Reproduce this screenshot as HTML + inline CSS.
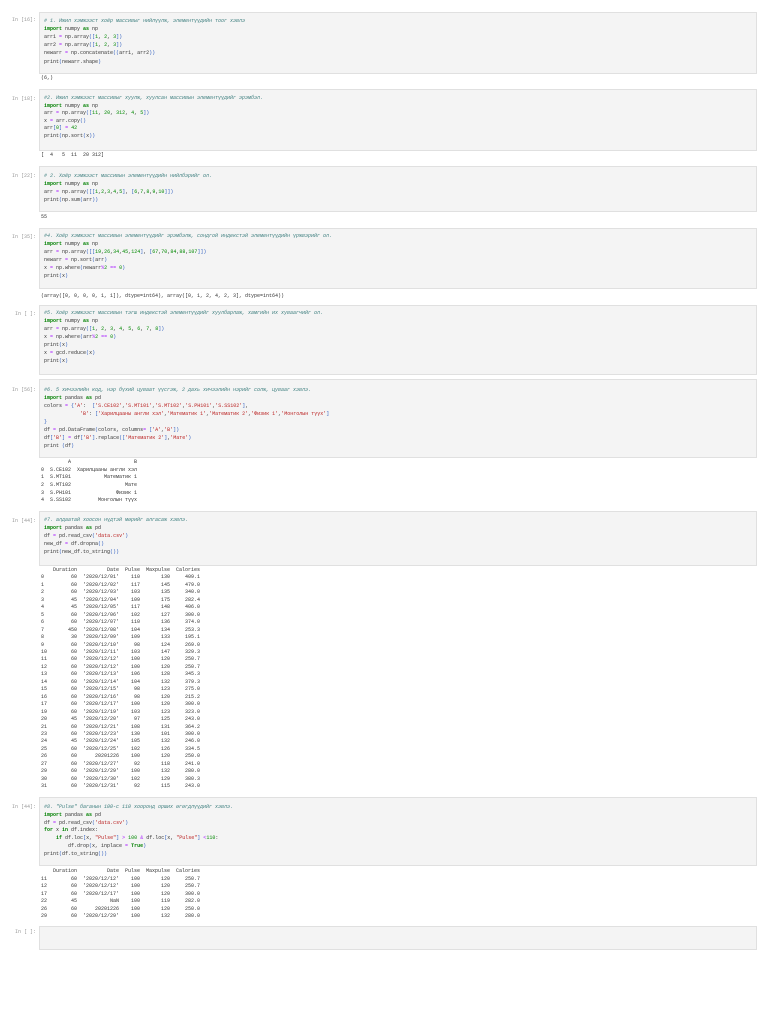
<!DOCTYPE html>
<html><head><meta charset="utf-8"><style>
body{margin:0;width:768px;height:1024px;background:#fff;position:relative;overflow:hidden;font-family:"Liberation Mono","DejaVu Sans Mono",monospace;}
.c{position:absolute;left:39px;width:718px;background:#f4f4f4;border:1px solid #e0e0e0;box-sizing:border-box;}
pre{position:absolute;margin:0;font-family:"Liberation Mono","DejaVu Sans Mono",monospace;font-size:5px;color:#333;white-space:pre;}
.p{position:absolute;right:732px;font-size:5px;color:#999;line-height:6px;white-space:pre;}
.cm{color:#408080;font-style:italic}.k{color:#008000;font-weight:bold}.o{color:#a2f}.n{color:#080}.s{color:#ba2121}.b{color:#3060c0}
</style></head><body>

<div class="c" style="top:12px;height:62px"></div>
<div class="p" style="top:17px">In [16]:</div>
<pre style="left:44px;top:16.5px;line-height:8.2px"><span class="cm"># 1. Ижил хэмжээст хоёр массивыг нийлүүлж, элементүүдийн тоог хэвлэ</span>
<span class="k">import</span> numpy <span class="k">as</span> np
arr1 <span class="o">=</span> np.array<span class="b">([</span><span class="n">1</span>, <span class="n">2</span>, <span class="n">3</span><span class="b">])</span>
arr2 <span class="o">=</span> np.array<span class="b">([</span><span class="n">1</span>, <span class="n">2</span>, <span class="n">3</span><span class="b">])</span>
newarr <span class="o">=</span> np.concatenate<span class="b">((</span>arr1, arr2<span class="b">))</span>
print<span class="b">(</span>newarr.shape<span class="b">)</span></pre>
<pre style="left:41px;top:75px;line-height:6px">(6,)</pre>

<div class="c" style="top:89px;height:62px"></div>
<div class="p" style="top:96px">In [18]:</div>
<pre style="left:44px;top:95px;line-height:7.6px"><span class="cm">#2. Ижил хэмжээст массивыг хуулж, хуулсан массивын элементүүдийг эрэмбэл.</span>
<span class="k">import</span> numpy <span class="k">as</span> np
arr <span class="o">=</span> np.array<span class="b">([</span><span class="n">11</span>, <span class="n">20</span>, <span class="n">312</span>, <span class="n">4</span>, <span class="n">5</span><span class="b">])</span>
x <span class="o">=</span> arr.copy<span class="b">()</span>
arr<span class="b">[</span><span class="n">0</span><span class="b">]</span> <span class="o">=</span> <span class="n">42</span>
print<span class="b">(</span>np.sort<span class="b">(</span>x<span class="b">))</span></pre>
<pre style="left:41px;top:152px;line-height:6px">[  4   5  11  20 312]</pre>

<div class="c" style="top:166px;height:46px"></div>
<div class="p" style="top:173px">In [22]:</div>
<pre style="left:44px;top:172px;line-height:8px"><span class="cm"># 2. Хоёр хэмжээст массивын элементүүдийн нийлбэрийг ол.</span>
<span class="k">import</span> numpy <span class="k">as</span> np
arr <span class="o">=</span> np.array<span class="b">([[</span><span class="n">1</span>,<span class="n">2</span>,<span class="n">3</span>,<span class="n">4</span>,<span class="n">5</span><span class="b">]</span>, <span class="b">[</span><span class="n">6</span>,<span class="n">7</span>,<span class="n">8</span>,<span class="n">9</span>,<span class="n">10</span><span class="b">]])</span>
print<span class="b">(</span>np.sum<span class="b">(</span>arr<span class="b">))</span></pre>
<pre style="left:41px;top:214px;line-height:6px">55</pre>

<div class="c" style="top:228px;height:61px"></div>
<div class="p" style="top:234px">In [35]:</div>
<pre style="left:44px;top:233.3px;line-height:7.9px"><span class="cm">#4. Хоёр хэмжээст массивын элементүүдийг эрэмбэлж, сондгой индекстэй элементүүдийн үржвэрийг ол.</span>
<span class="k">import</span> numpy <span class="k">as</span> np
arr <span class="o">=</span> np.array<span class="b">([[</span><span class="n">19</span>,<span class="n">26</span>,<span class="n">34</span>,<span class="n">45</span>,<span class="n">124</span><span class="b">]</span>, <span class="b">[</span><span class="n">67</span>,<span class="n">70</span>,<span class="n">84</span>,<span class="n">88</span>,<span class="n">107</span><span class="b">]])</span>
newarr <span class="o">=</span> np.sort<span class="b">(</span>arr<span class="b">)</span>
x <span class="o">=</span> np.where<span class="b">(</span>newarr<span class="o">%</span><span class="n">2</span> <span class="o">==</span> <span class="n">0</span><span class="b">)</span>
print<span class="b">(</span>x<span class="b">)</span></pre>
<pre style="left:41px;top:292.7px;line-height:6px">(array([0, 0, 0, 0, 1, 1]), dtype=int64), array([0, 1, 2, 4, 2, 3], dtype=int64))</pre>

<div class="c" style="top:305px;height:70px"></div>
<div class="p" style="top:311px">In [ ]:</div>
<pre style="left:44px;top:310.3px;line-height:7.9px"><span class="cm">#5. Хоёр хэмжээст массивын тэгш индекстэй элементүүдийг хуулбарлаж, хамгийн их хуваагчийг ол.</span>
<span class="k">import</span> numpy <span class="k">as</span> np
arr <span class="o">=</span> np.array<span class="b">([</span><span class="n">1</span>, <span class="n">2</span>, <span class="n">3</span>, <span class="n">4</span>, <span class="n">5</span>, <span class="n">6</span>, <span class="n">7</span>, <span class="n">8</span><span class="b">])</span>
x <span class="o">=</span> np.where<span class="b">(</span>arr<span class="o">%</span><span class="n">2</span> <span class="o">==</span> <span class="n">0</span><span class="b">)</span>
print<span class="b">(</span>x<span class="b">)</span>
x <span class="o">=</span> gcd.reduce<span class="b">(</span>x<span class="b">)</span>
print<span class="b">(</span>x<span class="b">)</span></pre>

<div class="c" style="top:379px;height:79px"></div>
<div class="p" style="top:387px">In [56]:</div>
<pre style="left:44px;top:386px;line-height:8px"><span class="cm">#6. 5 хичээлийн код, нэр бүхий цуваат үүсгэж, 2 дахь хичээлийн нэрийг солж, цувааг хэвлэ.</span>
<span class="k">import</span> pandas <span class="k">as</span> pd
colors <span class="o">=</span> <span class="b">{</span><span class="s">'A'</span>:  <span class="b">[</span><span class="s">'S.CE102'</span>,<span class="s">'S.MT101'</span>,<span class="s">'S.MT102'</span>,<span class="s">'S.PH101'</span>,<span class="s">'S.SS102'</span><span class="b">]</span>,
            <span class="s">'B'</span>: <span class="b">[</span><span class="s">'Харилцааны англи хэл'</span>,<span class="s">'Математик 1'</span>,<span class="s">'Математик 2'</span>,<span class="s">'Физик 1'</span>,<span class="s">'Монголын түүх'</span><span class="b">]</span>
<span class="b">}</span>
df <span class="o">=</span> pd.DataFrame<span class="b">(</span>colors, columns<span class="o">=</span> <span class="b">[</span><span class="s">'A'</span>,<span class="s">'B'</span><span class="b">])</span>
df<span class="b">[</span><span class="s">'B'</span><span class="b">]</span> <span class="o">=</span> df<span class="b">[</span><span class="s">'B'</span><span class="b">]</span>.replace<span class="b">([</span><span class="s">'Математик 2'</span><span class="b">]</span>,<span class="s">'Мате'</span><span class="b">)</span>
print <span class="b">(</span>df<span class="b">)</span></pre>
<pre style="left:41px;top:459.2px;line-height:7.6px">         A                     B
0  S.CE102  Харилцааны англи хэл
1  S.MT101           Математик 1
2  S.MT102                  Мате
3  S.PH101               Физик 1
4  S.SS102         Монголын түүх</pre>

<div class="c" style="top:511px;height:55px"></div>
<div class="p" style="top:518px">In [44]:</div>
<pre style="left:44px;top:517px;line-height:7.9px"><span class="cm">#7. алдаатай хоосон нүдтэй мөрийг алгасаж хэвлэ.</span>
<span class="k">import</span> pandas <span class="k">as</span> pd
df <span class="o">=</span> pd.read_csv<span class="b">(</span><span class="s">'data.csv'</span><span class="b">)</span>
new_df <span class="o">=</span> df.dropna<span class="b">()</span>
print<span class="b">(</span>new_df.to_string<span class="b">())</span></pre>
<pre style="left:41px;top:567px;line-height:7.45px">    Duration          Date  Pulse  Maxpulse  Calories
0         60  '2020/12/01'    110       130     409.1
1         60  '2020/12/02'    117       145     479.0
2         60  '2020/12/03'    103       135     340.0
3         45  '2020/12/04'    109       175     282.4
4         45  '2020/12/05'    117       148     406.0
5         60  '2020/12/06'    102       127     300.0
6         60  '2020/12/07'    110       136     374.0
7        450  '2020/12/08'    104       134     253.3
8         30  '2020/12/09'    109       133     195.1
9         60  '2020/12/10'     98       124     269.0
10        60  '2020/12/11'    103       147     329.3
11        60  '2020/12/12'    100       120     250.7
12        60  '2020/12/12'    100       120     250.7
13        60  '2020/12/13'    106       128     345.3
14        60  '2020/12/14'    104       132     379.3
15        60  '2020/12/15'     98       123     275.0
16        60  '2020/12/16'     98       120     215.2
17        60  '2020/12/17'    100       120     300.0
19        60  '2020/12/19'    103       123     323.0
20        45  '2020/12/20'     97       125     243.0
21        60  '2020/12/21'    108       131     364.2
23        60  '2020/12/23'    130       101     300.0
24        45  '2020/12/24'    105       132     246.0
25        60  '2020/12/25'    102       126     334.5
26        60      20201226    100       120     250.0
27        60  '2020/12/27'     92       118     241.0
29        60  '2020/12/29'    100       132     280.0
30        60  '2020/12/30'    102       129     380.3
31        60  '2020/12/31'     92       115     243.0</pre>

<div class="c" style="top:797px;height:69px"></div>
<div class="p" style="top:804px">In [44]:</div>
<pre style="left:44px;top:803.7px;line-height:7.9px"><span class="cm">#8. "Pulse" баганын 100-с 110 хооронд орших өгөгдлүүдийг хэвлэ.</span>
<span class="k">import</span> pandas <span class="k">as</span> pd
df <span class="o">=</span> pd.read_csv<span class="b">(</span><span class="s">'data.csv'</span><span class="b">)</span>
<span class="k">for</span> x <span class="k">in</span> df.index:
    <span class="k">if</span> df.loc<span class="b">[</span>x, <span class="s">"Pulse"</span><span class="b">]</span> <span class="o">&gt;</span> <span class="n">100</span> <span class="o">&amp;</span> df.loc<span class="b">[</span>x, <span class="s">"Pulse"</span><span class="b">]</span> <span class="o">&lt;</span><span class="n">110</span>:
        df.drop<span class="b">(</span>x, inplace <span class="o">=</span> <span class="k">True</span><span class="b">)</span>
print<span class="b">(</span>df.to_string<span class="b">())</span></pre>
<pre style="left:41px;top:868px;line-height:7.5px">    Duration          Date  Pulse  Maxpulse  Calories
11        60  '2020/12/12'    100       120     250.7
12        60  '2020/12/12'    100       120     250.7
17        60  '2020/12/17'    100       120     300.0
22        45           NaN    100       119     282.0
26        60      20201226    100       120     250.0
29        60  '2020/12/29'    100       132     280.0</pre>

<div class="c" style="top:926px;height:24px"></div>
<div class="p" style="top:929px">In [ ]:</div>
</body></html>
